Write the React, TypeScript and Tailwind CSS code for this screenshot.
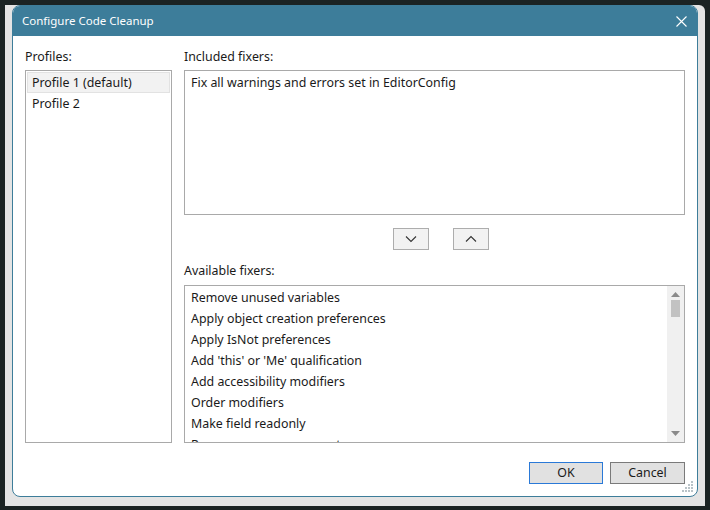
import React from "react";

const font = { fontFamily: '"Noto Sans", "Liberation Sans", sans-serif' };

function Chevron({ up }: { up?: boolean }) {
  return (
    <svg width="12" height="8" viewBox="0 0 12 8">
      <path
        d={up ? "M1 6.5 L6 1.5 L11 6.5" : "M1 1.5 L6 6.5 L11 1.5"}
        fill="none"
        stroke="#333"
        strokeWidth="1.1"
      />
    </svg>
  );
}

function Grip() {
  const dots: [number, number][] = [];
  for (let r = 0; r < 4; r++) {
    for (let c = 0; c <= r; c++) {
      dots.push([9 - c * 3, r * 3]);
    }
  }
  return (
    <svg width="12" height="12" viewBox="0 0 12 12" className="absolute right-[3px] bottom-[3px]">
      {dots.map(([x, y], i) => (
        <rect key={i} x={x} y={y} width="2" height="2" fill="#b9c3c8" />
      ))}
    </svg>
  );
}

const available = [
  "Remove unused variables",
  "Apply object creation preferences",
  "Apply IsNot preferences",
  "Add 'this' or 'Me' qualification",
  "Add accessibility modifiers",
  "Order modifiers",
  "Make field readonly",
  "Remove unnecessary casts",
];

export default function App() {
  return (
    <div className="w-[710px] h-[510px] bg-[#1b2323] pt-[5px] pl-[5px] overflow-hidden" style={font}>
      <div className="w-[700px] h-[501px] bg-[#e4e4e4] rounded-tr-[6px] pl-[7px]">
        <div className="relative w-[686px] h-[492px] rounded-[8px] overflow-hidden bg-white flex flex-col border border-[#3d7d9a]">
          <div className="h-[30px] bg-[#3d7d9a] flex items-center pl-[9px] pr-[10px] shrink-0">
            <span className="text-white text-[11.5px] leading-none">Configure Code Cleanup</span>
            <div className="ml-auto">
              <svg width="11" height="11" viewBox="0 0 11 11">
                <path d="M0.5 0.5 L10.5 10.5 M10.5 0.5 L0.5 10.5" stroke="#fff" strokeWidth="1.1" />
              </svg>
            </div>
          </div>
          <div className="flex-1 flex flex-col pl-[12px] pr-[12px] pt-[13px] text-[12.4px] text-[#1a1a1a]">
            <div className="flex gap-[12px]">
              <div className="w-[147px] flex flex-col">
                <div className="h-[16px] leading-[16px]">Profiles:</div>
                <div className="mt-[5px] h-[373px] border border-[#a9a9a9] p-[1px]">
                  <div className="h-[21px] leading-[19px] border border-[#e2e2e2] bg-[#f2f2f2] pl-[4px]">
                    Profile 1 (default)
                  </div>
                  <div className="h-[21px] leading-[21px] pl-[5px]">Profile 2</div>
                </div>
              </div>
              <div className="w-[501px] flex flex-col">
                <div className="h-[16px] leading-[16px]">Included fixers:</div>
                <div className="mt-[5px] h-[145px] border border-[#a9a9a9] pt-[1px] pl-[6px]">
                  <div className="h-[21px] leading-[21px]">Fix all warnings and errors set in EditorConfig</div>
                </div>
                <div className="mt-[13px] h-[22px] flex gap-[24px] pl-[209px]">
                  <div className="w-[36px] h-[22px] border border-[#adadad] bg-[#f2f2f2] flex items-center justify-center">
                    <Chevron />
                  </div>
                  <div className="w-[36px] h-[22px] border border-[#adadad] bg-[#f2f2f2] flex items-center justify-center">
                    <Chevron up />
                  </div>
                </div>
                <div className="mt-[13px] h-[16px] leading-[16px]">Available fixers:</div>
                <div className="mt-[6px] h-[158px] border border-[#a9a9a9] flex overflow-hidden">
                  <div className="flex-1 pt-[1px] pl-[6px] overflow-hidden">
                    {available.map((t) => (
                      <div key={t} className="h-[21px] leading-[21px] whitespace-nowrap">
                        {t}
                      </div>
                    ))}
                  </div>
                  <div className="w-[17px] bg-[#f0f0f0] flex flex-col items-center pt-[6px]">
                    <svg width="9" height="5" viewBox="0 0 9 5">
                      <path d="M0 5 L4.5 0 L9 5 Z" fill="#8a8a8a" />
                    </svg>
                    <div className="mt-[3px] w-[9px] h-[17px] bg-[#c2c2c2]" />
                    <div className="flex-1" />
                    <svg width="9" height="5" viewBox="0 0 9 5" className="mb-[6px]">
                      <path d="M0 0 L4.5 5 L9 0 Z" fill="#8a8a8a" />
                    </svg>
                  </div>
                </div>
              </div>
            </div>
            <div className="mt-[19px] flex justify-end gap-[7px]">
              <div className="w-[74px] h-[22px] border border-[#2a79d7] bg-[#e1e1e1] flex items-center justify-center">
                OK
              </div>
              <div className="w-[75px] h-[22px] border border-[#7a7a7a] bg-[#e1e1e1] flex items-center justify-center">
                Cancel
              </div>
            </div>
          </div>
          <Grip />
        </div>
      </div>
    </div>
  );
}
